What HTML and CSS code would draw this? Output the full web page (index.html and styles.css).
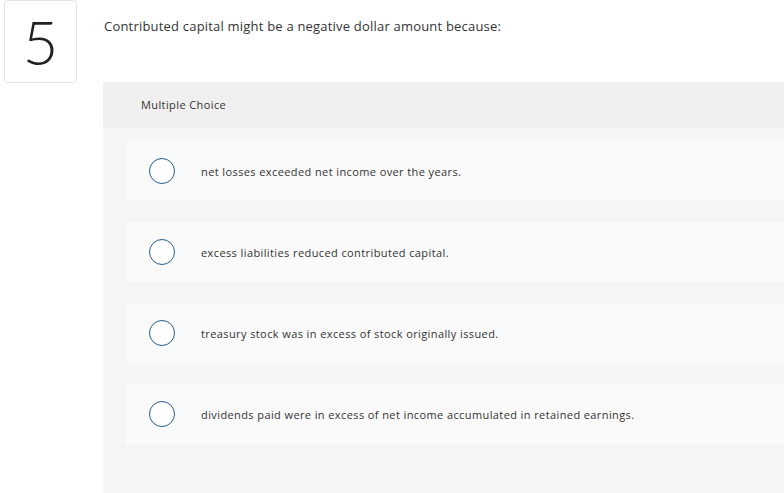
FILE: index.html
```html
<!DOCTYPE html>
<html>
<head>
<meta charset="utf-8">
<link rel="stylesheet" href="styles.css">
</head>
<body>
<div class="page">
  <div class="qnum">5</div>
  <div class="qmain">
    <p class="qtext">Contributed capital might be a negative dollar amount because:</p>
    <div class="panel">
      <div class="panel-head">Multiple Choice</div>
      <div class="panel-body">
        <div class="opt"><span class="radio"></span><span class="opt-text">net losses exceeded net income over the years.</span></div>
        <div class="opt"><span class="radio"></span><span class="opt-text">excess liabilities reduced contributed capital.</span></div>
        <div class="opt"><span class="radio"></span><span class="opt-text">treasury stock was in excess of stock originally issued.</span></div>
        <div class="opt"><span class="radio"></span><span class="opt-text">dividends paid were in excess of net income accumulated in retained earnings.</span></div>
      </div>
    </div>
  </div>
</div>
</body>
</html>
```
FILE: styles.css
```css
html, body {
  margin: 0;
  padding: 0;
  background: #fff;
  overflow: hidden;
}
body {
  font-family: "Open Sans", "Liberation Sans", sans-serif;
  color: #333;
}
.page {
  display: flex;
  align-items: flex-start;
  height: 493px;
}
.qnum {
  flex: 0 0 auto;
  box-sizing: border-box;
  width: 73px;
  height: 83px;
  margin-left: 4px;
  border: 1px solid #e3e3e3;
  border-radius: 4px;
  display: flex;
  align-items: center;
  justify-content: center;
  font-family: "Lato", sans-serif;
  font-weight: 300;
  font-size: 62px;
  color: #222;
  line-height: 1;
  padding-bottom: 2px;
}
.qmain {
  flex: 1 1 auto;
  margin-left: 26px;
  display: flex;
  flex-direction: column;
  height: 493px;
}
.qtext {
  margin: 17px 0 0 1px;
  height: 65px;
  font-size: 13px;
  letter-spacing: 0.2px;
  line-height: 18px;
  color: #333;
}
.panel {
  flex: 1 1 auto;
  background: #f5f5f5;
  display: flex;
  flex-direction: column;
}
.panel-head {
  height: 45px;
  background: #f0f0f0;
  padding-left: 38px;
  display: flex;
  align-items: center;
  font-size: 11px;
  letter-spacing: 0.4px;
  color: #333;
}
.panel-body {
  padding: 14px 0 0 23px;
  display: flex;
  flex-direction: column;
  gap: 21px;
}
.opt {
  height: 60px;
  background: #fafafa;
  display: flex;
  align-items: center;
  padding-left: 23px;
}
.radio {
  flex: 0 0 auto;
  box-sizing: border-box;
  width: 26px;
  height: 26px;
  border: 1.5px solid #245c94;
  border-radius: 50%;
  background: #fff;
  margin-right: 26px;
}
.opt-text {
  font-size: 11px;
  letter-spacing: 0.4px;
  color: #333;
}
```
